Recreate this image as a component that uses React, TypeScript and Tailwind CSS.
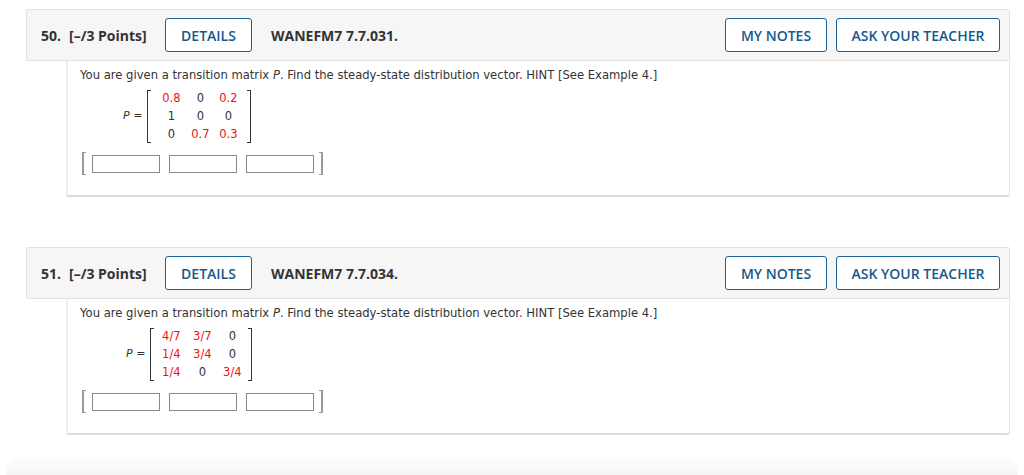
import React from "react";

const open = { fontFamily: '"Open Sans", "Noto Sans", sans-serif' };
const verd = { fontFamily: '"DejaVu Sans", Verdana, sans-serif' };

function Btn({ children, w }: { children: React.ReactNode; w: string }) {
  return (
    <div
      className={`h-[34px] ${w} flex items-center justify-center rounded-[3px] border-[1.5px] border-[#1d6294] bg-white text-[14px] font-semibold text-[#16598a]`}
      style={open}
    >
      {children}
    </div>
  );
}

function Cell({ v, red }: { v: string; red?: boolean }) {
  return <div className={`text-center ${red ? "text-[#ee1111]" : "text-[#333]"}`}>{v}</div>;
}

function Matrix({ rows, cols, ml }: { rows: [string, boolean][][]; cols: string; ml: string }) {
  return (
    <div className={`flex items-center ${ml} mt-[7px]`} style={verd}>
      <div className="text-[11px] text-[#333] mr-[5px]">
        <i>P</i> =
      </div>
      <div className="flex items-stretch">
        <div className="w-[4px] border-l border-t border-b border-[#333]" />
        <div className={`grid ${cols} gap-y-[1px] text-[11.5px] leading-[17px] px-[2px]`}>
          {rows.flat().map(([v, r], i) => (
            <Cell key={i} v={v} red={r} />
          ))}
        </div>
        <div className="w-[4px] border-r border-t border-b border-[#333]" />
      </div>
    </div>
  );
}

function Answer() {
  return (
    <div className="flex items-center ml-[2px] mt-[9px]">
      <div className="w-[4px] h-[23px] border-l-2 border-t border-b border-[#999]" />
      <div className="flex gap-[9px] ml-[6px] mr-[5px]">
        <div className="w-[68px] h-[18px] border border-[#888] bg-white" />
        <div className="w-[68px] h-[18px] border border-[#888] bg-white" />
        <div className="w-[68px] h-[18px] border border-[#888] bg-white" />
      </div>
      <div className="w-[4px] h-[23px] border-r-2 border-t border-b border-[#999]" />
    </div>
  );
}

function Question({
  num,
  code,
  rows,
  cols,
  ml,
}: {
  num: string;
  code: string;
  rows: [string, boolean][][];
  cols: string;
  ml: string;
}) {
  return (
    <div>
      <div
        className="ml-[26px] w-[984px] h-[52px] bg-[#f6f6f6] border border-[#e2e2e2] rounded-[2px] flex items-center pl-[14px] pr-[9px]"
        style={open}
      >
        <span className="text-[14px] font-bold text-[#333] w-[28px]">{num}</span>
        <span className="text-[14px] font-bold text-[#333] w-[96px]">[–/3 Points]</span>
        <Btn w="w-[87px]">DETAILS</Btn>
        <span className="ml-[19px] text-[14px] font-bold text-[#333]">{code}</span>
        <div className="ml-auto flex gap-[9px]">
          <Btn w="w-[102px]">MY NOTES</Btn>
          <Btn w="w-[164px]">ASK YOUR TEACHER</Btn>
        </div>
      </div>
      <div className="ml-[66px] w-[944px] h-[136px] bg-white border-l-2 border-l-[#efefef] border-r border-r-[#e6e6e6] border-b-2 border-b-[#dcdcdc] rounded-br-[3px] pl-[12px] pt-[6px]">
        <div className="text-[11.6px] text-[#333] leading-[16px]" style={verd}>
          You are given a transition matrix <i>P</i>. Find the steady-state distribution vector. HINT [See Example 4.]
        </div>
        <Matrix rows={rows} cols={cols} ml={ml} />
        <Answer />
      </div>
    </div>
  );
}

export default function App() {
  return (
    <div className="w-[1024px] h-[475px] bg-white relative overflow-hidden">
      <div className="pt-[9px]">
        <Question
          num="50."
          code="WANEFM7 7.7.031."
          cols="grid-cols-[36px_22px_34px]"
          ml="ml-[43px]"
          rows={[
            [["0.8", true], ["0", false], ["0.2", true]],
            [["1", false], ["0", false], ["0", false]],
            [["0", false], ["0.7", true], ["0.3", true]],
          ]}
        />
        <div className="h-[50px]" />
        <Question
          num="51."
          code="WANEFM7 7.7.034."
          cols="grid-cols-[30px_32px_28px]"
          ml="ml-[46px]"
          rows={[
            [["4/7", true], ["3/7", true], ["0", false]],
            [["1/4", true], ["3/4", true], ["0", false]],
            [["1/4", true], ["0", false], ["3/4", true]],
          ]}
        />
      </div>
      <div className="absolute left-[6px] right-[6px] top-[453px] h-[22px] rounded-t-[20px] bg-gradient-to-b from-white to-[#f5f5f5]" />
    </div>
  );
}
